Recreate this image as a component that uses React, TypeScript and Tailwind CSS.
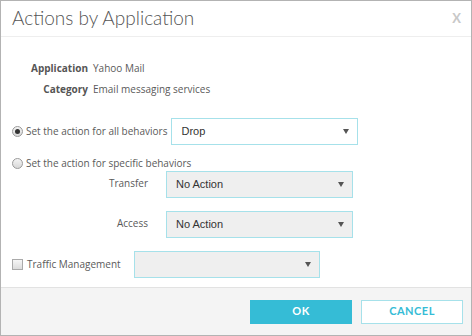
import React from 'react';

const Caret = () => (
  <svg width="6" height="5" viewBox="0 0 6 5" className="shrink-0">
    <path d="M0 0 H6 L3 5 Z" fill="#555" />
  </svg>
);

const Select: React.FC<{ value?: string; white?: boolean; width: string }> = ({ value, white, width }) => (
  <div
    className={`flex h-[27px] ${width} items-center justify-between border border-[#a6e1ea] pl-[9px] pr-[8px] ${
      white ? 'bg-white' : 'bg-[#efefef]'
    }`}
  >
    <span className="text-[11px] text-[#333] font-['Liberation_Sans',sans-serif]">{value}</span>
    <Caret />
  </div>
);

const Radio: React.FC<{ checked?: boolean }> = ({ checked }) => (
  <span className="flex h-[11px] w-[11px] shrink-0 items-center justify-center rounded-full border border-[#9a9a9a] bg-gradient-to-b from-[#f4f4f4] to-[#d8d8d8]">
    {checked && <span className="h-[5px] w-[5px] rounded-full bg-[#333]" />}
  </span>
);

export default function App() {
  return (
    <div className="flex h-[336px] w-[472px] flex-col border border-[#b3b3b3] bg-white font-['Open_Sans',sans-serif] text-[10px] text-[#5a5a5a]">
      {/* Header */}
      <div className="flex h-[36px] shrink-0 items-center justify-between border-b border-[#eeeeee] pl-[11px] pr-[10px]">
        <span className="text-[19px] font-light text-[#555] font-['Lato',sans-serif]">
          Actions by Application
        </span>
        <span className="text-[13px] font-bold text-[#c8c8c8] font-['Lato',sans-serif]">X</span>
      </div>

      {/* Body */}
      <div className="flex flex-1 flex-col pl-[11px]">
        <div className="mt-[23px] grid grid-cols-[76px_1fr] gap-x-[5px] gap-y-[5px] leading-[16px]">
          <span className="text-right font-bold text-[#555]">Application</span>
          <span>Yahoo Mail</span>
          <span className="text-right font-bold text-[#555]">Category</span>
          <span>Email messaging services</span>
        </div>

        <div className="mt-[21px] flex items-center">
          <Radio checked />
          <span className="ml-[3px] mr-[4px]">Set the action for all behaviors</span>
          <Select value="Drop" white width="w-[187px]" />
        </div>

        <div className="mt-[10px] flex h-[16px] items-center">
          <Radio />
          <span className="ml-[3px]">Set the action for specific behaviors</span>
        </div>

        <div className="flex items-center">
          <span className="w-[136px] pb-[2px] text-right">Transfer</span>
          <div className="ml-[18px]">
            <Select value="No Action" width="w-[187px]" />
          </div>
        </div>

        <div className="mt-[13px] flex items-center">
          <span className="w-[136px] pb-[2px] text-right">Access</span>
          <div className="ml-[18px]">
            <Select value="No Action" width="w-[187px]" />
          </div>
        </div>

        <div className="mt-[13px] flex items-center">
          <span className="h-[11px] w-[11px] shrink-0 border border-[#aaa] bg-gradient-to-b from-[#f6f6f6] to-[#dcdcdc]" />
          <span className="ml-[4px] w-[107px] whitespace-nowrap">Traffic Management</span>
          <Select width="w-[186px]" />
        </div>
      </div>

      {/* Footer */}
      <div className="flex h-[48px] shrink-0 items-center justify-end gap-[9px] border-t border-[#e2e2e2] bg-[#f4f4f4] pr-[8px]">
        <button className="h-[24px] w-[102px] bg-[#35bcd6] text-[11px] font-bold tracking-[0.5px] text-white font-['Lato',sans-serif]">
          OK
        </button>
        <button className="h-[24px] w-[102px] border border-[#a6e1ea] bg-white text-[11px] font-bold tracking-[0.5px] text-[#35bcd6] font-['Lato',sans-serif]">
          CANCEL
        </button>
      </div>
    </div>
  );
}
